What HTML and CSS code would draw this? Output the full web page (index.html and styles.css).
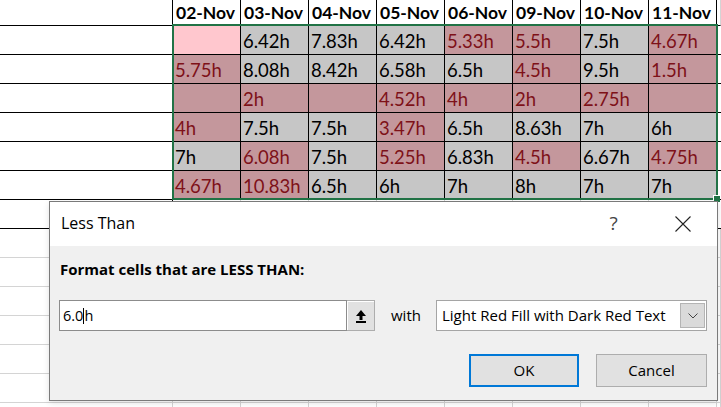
FILE: index.html
```html
<!DOCTYPE html>
<html>
<head>
<meta charset="utf-8">
<link rel="stylesheet" href="styles.css">
</head>
<body>
<div class="sheet">
  <div class="c hd"></div>
  <div class="c hd">02-Nov</div><div class="c hd">03-Nov</div><div class="c hd">04-Nov</div><div class="c hd">05-Nov</div><div class="c hd">06-Nov</div><div class="c hd">09-Nov</div><div class="c hd">10-Nov</div><div class="c hd">11-Nov</div>
  <div class="c hx"></div>

  <div class="c lc"></div>
  <div class="c d a"></div><div class="c d g">6.42h</div><div class="c d g">7.83h</div><div class="c d g">6.42h</div><div class="c d p">5.33h</div><div class="c d p">5.5h</div><div class="c d g">7.5h</div><div class="c d p">4.67h</div>
  <div class="c xk"></div>

  <div class="c lc"></div>
  <div class="c d p">5.75h</div><div class="c d g">8.08h</div><div class="c d g">8.42h</div><div class="c d g">6.58h</div><div class="c d g">6.5h</div><div class="c d p">4.5h</div><div class="c d g">9.5h</div><div class="c d p">1.5h</div>
  <div class="c xk"></div>

  <div class="c lc"></div>
  <div class="c d p"></div><div class="c d p">2h</div><div class="c d p"></div><div class="c d p">4.52h</div><div class="c d p">4h</div><div class="c d p">2h</div><div class="c d p">2.75h</div><div class="c d p"></div>
  <div class="c xk"></div>

  <div class="c lc"></div>
  <div class="c d p">4h</div><div class="c d g">7.5h</div><div class="c d g">7.5h</div><div class="c d p">3.47h</div><div class="c d g">6.5h</div><div class="c d g">8.63h</div><div class="c d g">7h</div><div class="c d g">6h</div>
  <div class="c xk"></div>

  <div class="c lc"></div>
  <div class="c d g">7h</div><div class="c d p">6.08h</div><div class="c d g">7.5h</div><div class="c d p">5.25h</div><div class="c d g">6.83h</div><div class="c d p">4.5h</div><div class="c d g">6.67h</div><div class="c d p">4.75h</div>
  <div class="c xk"></div>

  <div class="c lc"></div>
  <div class="c d p">4.67h</div><div class="c d p">10.83h</div><div class="c d g">6.5h</div><div class="c d g">6h</div><div class="c d g">7h</div><div class="c d g">8h</div><div class="c d g">7h</div><div class="c d g">7h</div>
  <div class="c xk"></div>

  <div class="c lc"></div>
  <div class="c k"></div><div class="c k"></div><div class="c k"></div><div class="c k"></div><div class="c k"></div><div class="c k"></div><div class="c k"></div><div class="c k"></div>
  <div class="c xk"></div>

  <div class="c"></div><div class="c"></div><div class="c"></div><div class="c"></div><div class="c"></div><div class="c"></div><div class="c"></div><div class="c"></div><div class="c"></div><div class="c"></div>
  <div class="c"></div><div class="c"></div><div class="c"></div><div class="c"></div><div class="c"></div><div class="c"></div><div class="c"></div><div class="c"></div><div class="c"></div><div class="c"></div>
  <div class="c"></div><div class="c"></div><div class="c"></div><div class="c"></div><div class="c"></div><div class="c"></div><div class="c"></div><div class="c"></div><div class="c"></div><div class="c"></div>
  <div class="c"></div><div class="c"></div><div class="c"></div><div class="c"></div><div class="c"></div><div class="c"></div><div class="c"></div><div class="c"></div><div class="c"></div><div class="c"></div>
  <div class="c"></div><div class="c"></div><div class="c"></div><div class="c"></div><div class="c"></div><div class="c"></div><div class="c"></div><div class="c"></div><div class="c"></div><div class="c"></div>
  <div class="c"></div><div class="c"></div><div class="c"></div><div class="c"></div><div class="c"></div><div class="c"></div><div class="c"></div><div class="c"></div><div class="c"></div><div class="c"></div>
  <div class="c"></div><div class="c"></div><div class="c"></div><div class="c"></div><div class="c"></div><div class="c"></div><div class="c"></div><div class="c"></div><div class="c"></div><div class="c"></div>
</div>

<div class="sel"><span class="handle"></span></div>

<div class="dialog">
  <div class="titlebar">
    <div class="title">Less Than</div>
    <div class="tbtn help">?</div>
    <div class="tbtn close">
      <svg width="16" height="16" viewBox="0 0 16 16"><path d="M0.5 0.5 L15.5 15.5 M15.5 0.5 L0.5 15.5" stroke="#222" stroke-width="1.1" fill="none"/></svg>
    </div>
  </div>
  <div class="body">
    <div class="label">Format cells that are LESS THAN:</div>
    <div class="inrow">
      <div class="input"><span>6.0</span><span class="caret"></span><span>h</span></div>
      <div class="pick">
        <svg width="12" height="14" viewBox="0 0 12 14"><path d="M6 1 L11 7 L7.5 7 L7.5 11 L4.5 11 L4.5 7 L1 7 Z" fill="#000"/><rect x="1" y="12" width="10" height="2" fill="#000"/></svg>
      </div>
      <div class="with">with</div>
      <div class="select">
        <span class="seltext">Light Red Fill with Dark Red Text</span>
        <span class="drop"><svg width="10" height="6" viewBox="0 0 10 6"><path d="M0.5 0.5 L5 5 L9.5 0.5" stroke="#444" stroke-width="1" fill="none"/></svg></span>
      </div>
    </div>
    <div class="btnrow">
      <div class="btn ok">OK</div>
      <div class="btn cancel">Cancel</div>
    </div>
  </div>
</div>
</body>
</html>
```

FILE: styles.css
```css
html, body {
  margin: 0;
  padding: 0;
  background: #fff;
  overflow: hidden;
}
body {
  width: 721px;
  height: 407px;
  position: relative;
}
.sheet {
  height: 407px;
  overflow: hidden;
  display: grid;
  grid-template-columns: 173px repeat(8, 68px) 1fr;
  grid-template-rows: 26px;
  grid-auto-rows: 29px;
  font-family: Lato, "Liberation Sans", sans-serif;
  font-size: 18.5px;
  color: #000;
}
.c {
  box-sizing: border-box;
  border-right: 1px solid #d4d4d4;
  border-bottom: 1px solid #d4d4d4;
  display: flex;
  align-items: flex-end;
  padding: 0 0 2px 2px;
  line-height: 22px;
  white-space: nowrap;
  overflow: hidden;
}
.hd {
  border-right: 1px solid #000;
  border-bottom: 1px solid #000;
  font-weight: 700;
  font-size: 17.5px;
  padding-bottom: 1px;
  padding-left: 3px;
}
.hx {
  border-bottom: 1px solid #000;
}
.lc {
  border-right: 1px solid #000;
  border-bottom: 1px solid #000;
}
.d {
  border-right: 1px solid #000;
  border-bottom: 1px solid #000;
}
.g {
  background: #c6c6c6;
}
.p {
  background: #c4979c;
  color: #7e1118;
}
.a {
  background: #ffc7ce;
}
.k {
  border-bottom: 1px solid #000;
}
.xk {
  border-right: none;
  border-bottom: 1px solid #000;
}
.sel {
  position: absolute;
  left: 172px;
  top: 24px;
  width: 546px;
  height: 176px;
  box-sizing: border-box;
  border: 2px solid #217346;
}
.handle {
  position: absolute;
  right: -4px;
  bottom: -4px;
  width: 6px;
  height: 6px;
  background: #217346;
  box-shadow: -1px -1px 0 0 #fff;
}
.dialog {
  position: absolute;
  left: 49px;
  top: 201px;
  width: 669px;
  height: 200px;
  box-sizing: border-box;
  border: 1px solid #7a7a7a;
  display: flex;
  flex-direction: column;
  font-family: "Open Sans", "Noto Sans", sans-serif;
  color: #000;
  box-shadow: 0 2px 6px rgba(0,0,0,0.12);
}
.titlebar {
  height: 44px;
  background: #fff;
  display: flex;
  align-items: center;
}
.title {
  flex: 1;
  padding-left: 11px;
  font-size: 16px;
  padding-bottom: 2px;
}
.tbtn {
  width: 69px;
  height: 44px;
  display: flex;
  align-items: center;
  justify-content: center;
}
.help {
  font-size: 19px;
  font-weight: 400;
  color: #444;
  padding-bottom: 2px;
  box-sizing: border-box;
}
.body {
  flex: 1;
  background: #f0f0f0;
  padding: 14px 10px 0 9px;
  display: flex;
  flex-direction: column;
}
.label {
  font-weight: 700;
  font-size: 15px;
  line-height: 18px;
  padding-left: 1px;
}
.inrow {
  margin-top: 22px;
  height: 31px;
  display: flex;
  align-items: center;
}
.input {
  width: 288px;
  height: 31px;
  box-sizing: border-box;
  background: #fff;
  border: 1px solid #8c8c8c;
  display: flex;
  align-items: center;
  padding-left: 3px;
  font-size: 14.5px;
}
.caret {
  display: inline-block;
  width: 1px;
  height: 16px;
  background: #000;
}
.pick {
  width: 28px;
  height: 31px;
  box-sizing: border-box;
  background: #e1e1e1;
  border: 1px solid #adadad;
  border-left: none;
  box-shadow: inset 1px 1px 0 #fff;
  display: flex;
  align-items: center;
  justify-content: center;
}
.with {
  margin-left: 16px;
  width: 45px;
  font-size: 15px;
  padding-bottom: 2px;
}
.select {
  width: 271px;
  height: 31px;
  box-sizing: border-box;
  background: #fff;
  border: 1px solid #a5a5a5;
  display: flex;
  align-items: center;
  padding-left: 5px;
  padding-right: 1px;
  font-size: 15px;
}
.seltext {
  flex: 1;
  padding-bottom: 1px;
}
.drop {
  width: 25px;
  height: 25px;
  box-sizing: border-box;
  background: #dadada;
  border: 1px solid #b4b4b4;
  display: flex;
  align-items: center;
  justify-content: center;
}
.btnrow {
  margin-top: 23px;
  display: flex;
  justify-content: flex-end;
  gap: 17px;
}
.btn {
  height: 33px;
  box-sizing: border-box;
  background: #e1e1e1;
  display: flex;
  align-items: center;
  justify-content: center;
  font-size: 15px;
  padding-bottom: 1px;
}
.ok {
  width: 110px;
  border: 2px solid #0078d7;
}
.cancel {
  width: 111px;
  border: 1px solid #adadad;
}
```
